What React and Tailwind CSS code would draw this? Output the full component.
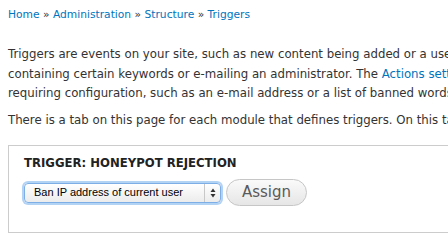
import React from 'react';

export default function App() {
    return (
        <div className="w-[448px] h-[242px] overflow-hidden bg-white text-[#333] text-[11.75px] leading-[19.5px] font-['DejaVu_Sans',sans-serif]">
            {/* Breadcrumb */}
            <div className="pl-2 pt-[6px] whitespace-nowrap text-[#0074bd] text-[10.7px] leading-[18px]">
                <a>Home</a> <span className="text-[#333]">»</span> <a>Administration</a>{' '}
                <span className="text-[#333]">»</span> <a>Structure</a> <span className="text-[#333]">»</span>{' '}
                <a>Triggers</a>
            </div>

            <div className="pl-2 pt-[21px] whitespace-nowrap">
                <p>Triggers are events on your site, such as new content being added or a user logs in.</p>
                <p>
                    containing certain keywords or e-mailing an administrator. The{' '}
                    <a className="text-[#0074bd]">Actions settings page</a>
                </p>
                <p>requiring configuration, such as an e-mail address or a list of banned words.</p>
                <p className="mt-[7px]">There is a tab on this page for each module that defines triggers. On this tab</p>
            </div>

            {/* Fieldset */}
            <div className="ml-2 mt-[15px] w-[460px] h-[88px] border border-[#ccc] pl-[15px] pt-[8px]">
                <h2 className="font-bold uppercase text-[#222] text-[11.7px] leading-[18px]">
                    Trigger: Honeypot rejection
                </h2>
                <div className="flex items-center gap-[5px] mt-[7px]">
                    <div className="w-[197px] h-[20px] rounded-[4px] border border-[#7eaee6] shadow-[0_0_0_2px_#b3d3f5] bg-gradient-to-b from-white to-[#ececec] flex items-center">
                        <span className="flex-1 pl-[9px] text-[11px] leading-none text-black font-['Liberation_Sans',sans-serif]">
                            Ban IP address of current user
                        </span>
                        <span className="w-[16px] h-full border-l border-[#c8c8c8] flex items-center justify-center">
                            <svg width="6" height="10" viewBox="0 0 6 10">
                                <path d="M3 0.5 L5.5 4 L0.5 4 Z" fill="#333" />
                                <path d="M3 9.5 L5.5 6 L0.5 6 Z" fill="#333" />
                            </svg>
                        </span>
                    </div>
                    <button className="w-[81px] h-[27px] rounded-full border border-[#c6c6c6] bg-gradient-to-b from-[#fafafa] to-[#e6e6e6] text-[15px] text-[#5a5a5a] font-['DejaVu_Sans',sans-serif] leading-none">
                        Assign
                    </button>
                </div>
            </div>
        </div>
    );
}
